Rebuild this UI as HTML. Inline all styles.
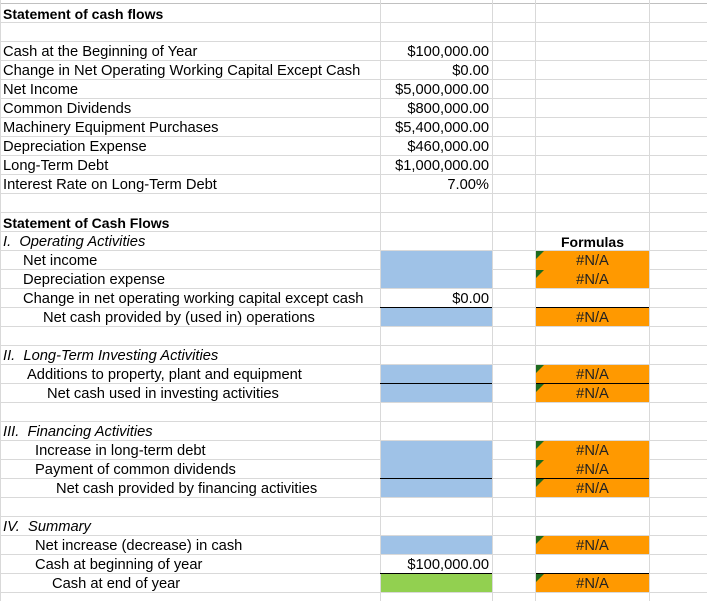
<!DOCTYPE html>
<html><head><meta charset="utf-8"><style>
body{margin:0;width:707px;height:601px;overflow:hidden;background:#fff;font-family:"Liberation Sans",Arial,sans-serif;font-size:14.7px;color:#000;position:relative}
.h{position:absolute;left:0;width:707px;height:1px;background:#d9d9d9}
.v{position:absolute;top:0;height:601px;width:1px;background:#d9d9d9}
.t{position:absolute;height:19px;line-height:19px;margin-top:2px;white-space:nowrap}
.r{text-align:right}
.f{position:absolute;height:18px}
.bl{background:#9fc2e7}
.or{background:#ff9900}
.gr{background:#92d050}
.k{position:absolute;height:1px;background:#000}
.tri{position:absolute;width:0;height:0;border-top:8px solid #1e6b1e;border-right:8px solid transparent}
.na{position:absolute;left:536px;width:113px;text-align:center;height:19px;line-height:19px;margin-top:2px;color:#222}
</style></head><body>
<div class="h" style="top:3px;background:#c0c0c0"></div>
<div class="h" style="top:22px"></div><div class="h" style="top:41px"></div><div class="h" style="top:60px"></div><div class="h" style="top:79px"></div><div class="h" style="top:98px"></div><div class="h" style="top:117px"></div><div class="h" style="top:136px"></div><div class="h" style="top:155px"></div><div class="h" style="top:174px"></div><div class="h" style="top:193px"></div><div class="h" style="top:212px"></div><div class="h" style="top:231px"></div><div class="h" style="top:250px"></div><div class="h" style="top:269px"></div><div class="h" style="top:288px"></div><div class="h" style="top:307px"></div><div class="h" style="top:326px"></div><div class="h" style="top:345px"></div><div class="h" style="top:364px"></div><div class="h" style="top:383px"></div><div class="h" style="top:402px"></div><div class="h" style="top:421px"></div><div class="h" style="top:440px"></div><div class="h" style="top:459px"></div><div class="h" style="top:478px"></div><div class="h" style="top:497px"></div><div class="h" style="top:516px"></div><div class="h" style="top:535px"></div><div class="h" style="top:554px"></div><div class="h" style="top:573px"></div><div class="h" style="top:592px"></div>
<div class="v" style="left:0"></div><div class="v" style="left:380px"></div><div class="v" style="left:492px"></div><div class="v" style="left:535px"></div><div class="v" style="left:649px"></div>

<div class="f bl" style="left:381px;width:111px;top:251px;height:37px"></div>
<div class="f bl" style="left:381px;width:111px;top:308px"></div>
<div class="f bl" style="left:381px;width:111px;top:365px;height:37px"></div>
<div class="f bl" style="left:381px;width:111px;top:441px;height:56px"></div>
<div class="f bl" style="left:381px;width:111px;top:536px"></div>
<div class="f gr" style="left:381px;width:111px;top:574px"></div>
<div class="f or" style="left:536px;width:113px;top:251px;height:37px"></div>
<div class="f or" style="left:536px;width:113px;top:308px"></div>
<div class="f or" style="left:536px;width:113px;top:365px;height:37px"></div>
<div class="f or" style="left:536px;width:113px;top:441px;height:56px"></div>
<div class="f or" style="left:536px;width:113px;top:536px"></div>
<div class="f or" style="left:536px;width:113px;top:574px"></div>
<div class="h" style="top:269px;left:381px;width:111px;background:#9fc2e7"></div>
<div class="h" style="top:269px;left:536px;width:113px;background:#ff9900"></div>
<div class="h" style="top:459px;left:381px;width:111px;background:#9fc2e7"></div>
<div class="h" style="top:459px;left:536px;width:113px;background:#ff9900"></div>

<div class="k" style="top:307px;left:380px;width:112px"></div><div class="k" style="top:307px;left:536px;width:113px"></div>
<div class="k" style="top:383px;left:380px;width:112px"></div><div class="k" style="top:383px;left:536px;width:113px"></div>
<div class="k" style="top:478px;left:380px;width:112px"></div><div class="k" style="top:478px;left:536px;width:113px"></div>
<div class="k" style="top:573px;left:380px;width:112px"></div><div class="k" style="top:573px;left:536px;width:113px"></div>

<div class="tri" style="left:536px;top:251px"></div><div class="tri" style="left:536px;top:270px"></div>
<div class="tri" style="left:536px;top:365px"></div><div class="tri" style="left:536px;top:384px"></div>
<div class="tri" style="left:536px;top:441px"></div><div class="tri" style="left:536px;top:460px"></div><div class="tri" style="left:536px;top:479px"></div>
<div class="tri" style="left:536px;top:536px"></div><div class="tri" style="left:536px;top:574px"></div>

<div class="t" style="left:3px;top:3px;font-weight:bold;font-size:14px">Statement of cash flows</div>
<div class="t" style="left:3px;top:41px">Cash at the Beginning of Year</div>
<div class="t" style="left:3px;top:60px">Change in Net Operating Working Capital Except Cash</div>
<div class="t" style="left:3px;top:79px">Net Income</div>
<div class="t" style="left:3px;top:98px">Common Dividends</div>
<div class="t" style="left:3px;top:117px">Machinery Equipment Purchases</div>
<div class="t" style="left:3px;top:136px">Depreciation Expense</div>
<div class="t" style="left:3px;top:155px">Long-Term Debt</div>
<div class="t" style="left:3px;top:174px">Interest Rate on Long-Term Debt</div>
<div class="t" style="left:3px;top:212px;font-weight:bold;font-size:14px">Statement of Cash Flows</div>
<div class="t" style="left:3px;top:231px;font-style:italic">I.&nbsp; Operating Activities</div>
<div class="t" style="left:23px;top:250px">Net income</div>
<div class="t" style="left:23px;top:269px">Depreciation expense</div>
<div class="t" style="left:23px;top:288px">Change in net operating working capital except cash</div>
<div class="t" style="left:43px;top:307px">Net cash provided by (used in) operations</div>
<div class="t" style="left:3px;top:345px;font-style:italic">II.&nbsp; Long-Term Investing Activities</div>
<div class="t" style="left:27px;top:364px">Additions to property, plant and equipment</div>
<div class="t" style="left:47px;top:383px">Net cash used in investing activities</div>
<div class="t" style="left:3px;top:421px;font-style:italic">III.&nbsp; Financing Activities</div>
<div class="t" style="left:35px;top:440px">Increase in long-term debt</div>
<div class="t" style="left:35px;top:459px">Payment of common dividends</div>
<div class="t" style="left:56px;top:478px">Net cash provided by financing activities</div>
<div class="t" style="left:3px;top:516px;font-style:italic">IV.&nbsp; Summary</div>
<div class="t" style="left:35px;top:535px">Net increase (decrease) in cash</div>
<div class="t" style="left:35px;top:554px">Cash at beginning of year</div>
<div class="t" style="left:52px;top:573px">Cash at end of year</div>

<div class="t r" style="left:381px;width:108px;top:41px">$100,000.00</div>
<div class="t r" style="left:381px;width:108px;top:60px">$0.00</div>
<div class="t r" style="left:381px;width:108px;top:79px">$5,000,000.00</div>
<div class="t r" style="left:381px;width:108px;top:98px">$800,000.00</div>
<div class="t r" style="left:381px;width:108px;top:117px">$5,400,000.00</div>
<div class="t r" style="left:381px;width:108px;top:136px">$460,000.00</div>
<div class="t r" style="left:381px;width:108px;top:155px">$1,000,000.00</div>
<div class="t r" style="left:381px;width:108px;top:174px">7.00%</div>
<div class="t r" style="left:381px;width:108px;top:288px">$0.00</div>
<div class="t r" style="left:381px;width:108px;top:554px">$100,000.00</div>

<div class="na" style="top:231px;font-weight:bold;color:#000;font-size:14px">Formulas</div>
<div class="na" style="top:250px">#N/A</div><div class="na" style="top:269px">#N/A</div>
<div class="na" style="top:307px">#N/A</div>
<div class="na" style="top:364px">#N/A</div><div class="na" style="top:383px">#N/A</div>
<div class="na" style="top:440px">#N/A</div><div class="na" style="top:459px">#N/A</div><div class="na" style="top:478px">#N/A</div>
<div class="na" style="top:535px">#N/A</div><div class="na" style="top:573px">#N/A</div>
</body></html>
